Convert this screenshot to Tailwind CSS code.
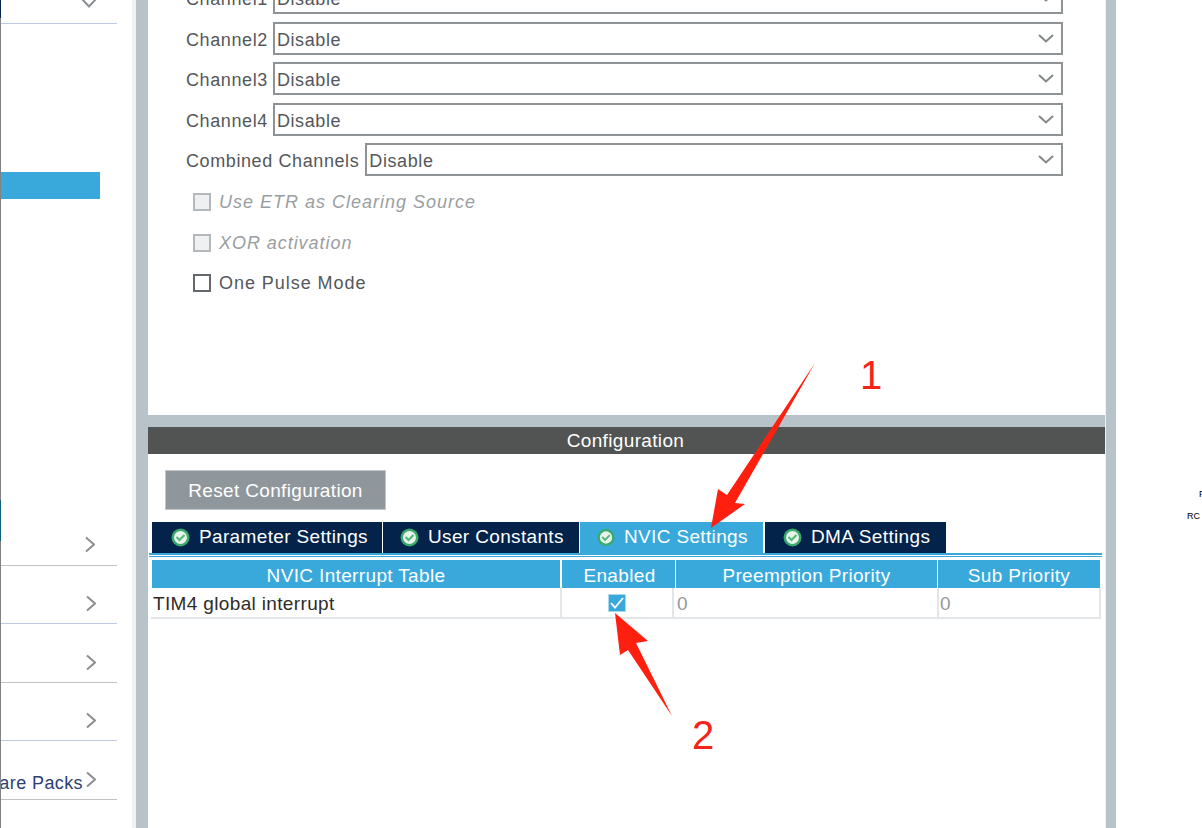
<!DOCTYPE html>
<html lang="en">
<head>
    <meta charset="UTF-8">
    <title>TIM4 NVIC Settings</title>
    <script src="https://cdn.jsdelivr.net/npm/@tailwindcss/browser@4"></script>
</head>
<body class="bg-white">
    <div class="relative flex w-[1202px] h-[828px] overflow-hidden bg-white font-['Liberation_Sans',Arial,sans-serif] text-[18px] text-[#54585c] tracking-[0.6px]">

        <!-- left list, cut off by the crop -->
        <aside class="relative w-[132px] h-full shrink-0 flex flex-col border-l border-[#808284]">
            <div class="absolute left-[-1px] top-0 w-[1px] h-[18px] bg-[#03234b]"></div>
            <div class="absolute left-[-1px] top-[500px] w-[1px] h-[41px] bg-[#0f5f80]"></div>
            <div class="w-[116px] h-[24px] shrink-0 border-b border-[#bccbe2] flex justify-end items-start pr-[19px]">
                <svg class="mt-[-2px]" width="18" height="10" viewBox="0 0 18 10" fill="none" stroke="#8b8f92" stroke-width="2"><path d="M2 1 L9 8.5 L16 1"/></svg>
            </div>
            <div class="w-[116px] h-[542px] shrink-0 border-b border-[#bcc2c6] pt-[148px] flex flex-col">
                <div class="w-[99px] h-[27px] bg-[#39a9dc]"></div>
                <svg class="mt-auto mb-[12px] ml-[84px]" width="10" height="17" viewBox="0 0 10 16" fill="none" stroke="#8b8f92" stroke-width="2"><path d="M1 1 L9 8 L1 15"/></svg>
            </div>
            <div class="w-[116px] h-[58px] shrink-0 border-b border-[#bccbe2] flex justify-end items-center pr-[21px] pt-[17px]">
                <svg width="10" height="17" viewBox="0 0 10 16" fill="none" stroke="#8b8f92" stroke-width="2"><path d="M1 1 L9 8 L1 15"/></svg>
            </div>
            <div class="w-[116px] h-[59px] shrink-0 border-b border-[#bcc2c6] flex justify-end items-center pr-[21px] pt-[18px]">
                <svg width="10" height="17" viewBox="0 0 10 16" fill="none" stroke="#8b8f92" stroke-width="2"><path d="M1 1 L9 8 L1 15"/></svg>
            </div>
            <div class="w-[116px] h-[58px] shrink-0 border-b border-[#bccbe2] flex justify-end items-center pr-[21px] pt-[17px]">
                <svg width="10" height="17" viewBox="0 0 10 16" fill="none" stroke="#8b8f92" stroke-width="2"><path d="M1 1 L9 8 L1 15"/></svg>
            </div>
            <div class="w-[116px] h-[59px] shrink-0 border-b border-[#bcc2c6] flex justify-end items-center overflow-hidden">
                <span class="text-[#2d3f73] whitespace-nowrap pt-[26px] tracking-[0.4px]">Software Packs</span>
                <svg class="shrink-0 mr-[21px] ml-[3px] mt-[18px]" width="10" height="17" viewBox="0 0 10 16" fill="none" stroke="#8b8f92" stroke-width="2"><path d="M1 1 L9 8 L1 15"/></svg>
            </div>
        </aside>

        <div class="w-[4px] h-full shrink-0 bg-[#eef0f1]"></div>
        <div class="w-[12px] h-full shrink-0 bg-[#b8c3c9]"></div>

        <!-- mode + configuration panels -->
        <main class="w-[958px] h-full shrink-0 flex flex-col bg-[#b8c3c9] border-r border-[#eef0f1]">
            <section class="h-[415px] shrink-0 bg-white pl-[38px] overflow-hidden">
                <div class="flex items-center gap-[5px] h-[33px] mt-[-19px]">
                    <span class="pt-[3px]">Channel1</span>
                    <div class="flex-1 h-[33px] mr-[42px] border-2 border-[#8d9296] flex items-center justify-between pl-[2px] pr-[6px]"><span class="pt-[3px]">Disable</span><svg width="18" height="9" viewBox="0 0 18 9" fill="none" stroke="#83878a" stroke-width="2"><path d="M2 1 L9 7.5 L16 1"/></svg></div>
                </div>
                <div class="flex items-center gap-[5px] h-[33px] mt-[8px]">
                    <span class="pt-[3px]">Channel2</span>
                    <div class="flex-1 h-[33px] mr-[42px] border-2 border-[#8d9296] flex items-center justify-between pl-[2px] pr-[6px]"><span class="pt-[3px]">Disable</span><svg width="18" height="9" viewBox="0 0 18 9" fill="none" stroke="#83878a" stroke-width="2"><path d="M2 1 L9 7.5 L16 1"/></svg></div>
                </div>
                <div class="flex items-center gap-[5px] h-[33px] mt-[7px]">
                    <span class="pt-[3px]">Channel3</span>
                    <div class="flex-1 h-[33px] mr-[42px] border-2 border-[#8d9296] flex items-center justify-between pl-[2px] pr-[6px]"><span class="pt-[3px]">Disable</span><svg width="18" height="9" viewBox="0 0 18 9" fill="none" stroke="#83878a" stroke-width="2"><path d="M2 1 L9 7.5 L16 1"/></svg></div>
                </div>
                <div class="flex items-center gap-[5px] h-[33px] mt-[8px]">
                    <span class="pt-[3px]">Channel4</span>
                    <div class="flex-1 h-[33px] mr-[42px] border-2 border-[#8d9296] flex items-center justify-between pl-[2px] pr-[6px]"><span class="pt-[3px]">Disable</span><svg width="18" height="9" viewBox="0 0 18 9" fill="none" stroke="#83878a" stroke-width="2"><path d="M2 1 L9 7.5 L16 1"/></svg></div>
                </div>
                <div class="flex items-center gap-[6px] h-[33px] mt-[7px]">
                    <span class="pt-[3px]">Combined Channels</span>
                    <div class="flex-1 h-[33px] mr-[42px] border-2 border-[#8d9296] flex items-center justify-between pl-[2px] pr-[6px]"><span class="pt-[3px]">Disable</span><svg width="18" height="9" viewBox="0 0 18 9" fill="none" stroke="#83878a" stroke-width="2"><path d="M2 1 L9 7.5 L16 1"/></svg></div>
                </div>
                <div class="flex items-center gap-[8px] h-[18px] mt-[17px] ml-[7px]">
                    <div class="w-[18px] h-[18px] border-2 border-[#b4b8bb] bg-[#eef0f2]"></div>
                    <span class="italic text-[#9a9ea1] tracking-[1px]">Use ETR as Clearing Source</span>
                </div>
                <div class="flex items-center gap-[8px] h-[18px] mt-[23px] ml-[7px]">
                    <div class="w-[18px] h-[18px] border-2 border-[#b4b8bb] bg-[#eef0f2]"></div>
                    <span class="italic text-[#9a9ea1] tracking-[0.95px]">XOR activation</span>
                </div>
                <div class="flex items-center gap-[8px] h-[18px] mt-[22px] ml-[7px]">
                    <div class="w-[18px] h-[18px] border-2 border-[#66696c] bg-white"></div>
                    <span class="tracking-[0.95px]">One Pulse Mode</span>
                </div>
            </section>

            <section class="h-[401px] mt-[12px] shrink-0 bg-white flex flex-col text-[19px] tracking-[0.35px]">
                <div class="h-[27px] shrink-0 bg-[#525453] text-white text-center leading-[28px] pr-[2px]">Configuration</div>
                <button class="w-[221px] h-[40px] ml-[17px] mt-[16px] shrink-0 bg-[#90979c] border border-[#c3c7ca] text-white pt-[2px]">Reset Configuration</button>

                <div class="flex h-[31px] mt-[12px] ml-[4px] shrink-0 text-white">
                    <div class="w-[230px] bg-[#03234b] flex items-center gap-[9px] pl-[19px]">
                        <svg width="19" height="19" viewBox="0 0 19 19"><circle cx="9.5" cy="9.5" r="9" fill="#3aa96c"/><circle cx="9.5" cy="9.5" r="6.5" fill="#e8f3ec"/><path d="M5.5 9 L8.5 12 L13.5 7" fill="none" stroke="#4fb877" stroke-width="2"/></svg>
                        <span>Parameter Settings</span>
                    </div>
                    <div class="w-[196px] ml-[1px] bg-[#03234b] flex items-center gap-[9px] pl-[17px]">
                        <svg width="19" height="19" viewBox="0 0 19 19"><circle cx="9.5" cy="9.5" r="9" fill="#3aa96c"/><circle cx="9.5" cy="9.5" r="6.5" fill="#e8f3ec"/><path d="M5.5 9 L8.5 12 L13.5 7" fill="none" stroke="#4fb877" stroke-width="2"/></svg>
                        <span>User Constants</span>
                    </div>
                    <div class="w-[183px] ml-[1px] bg-[#39a9dc] flex items-center gap-[9px] pl-[17px]">
                        <svg width="18" height="19" viewBox="0 0 19 19"><circle cx="9.5" cy="9.5" r="9" fill="#3aa96c"/><circle cx="9.5" cy="9.5" r="6.5" fill="#e8f3ec"/><path d="M5.5 9 L8.5 12 L13.5 7" fill="none" stroke="#4fb877" stroke-width="2"/></svg>
                        <span>NVIC Settings</span>
                    </div>
                    <div class="w-[181px] ml-[2px] bg-[#03234b] flex items-center gap-[9px] pl-[18px]">
                        <svg width="19" height="19" viewBox="0 0 19 19"><circle cx="9.5" cy="9.5" r="9" fill="#3aa96c"/><circle cx="9.5" cy="9.5" r="6.5" fill="#e8f3ec"/><path d="M5.5 9 L8.5 12 L13.5 7" fill="none" stroke="#4fb877" stroke-width="2"/></svg>
                        <span>DMA Settings</span>
                    </div>
                </div>
                <div class="h-[4px] ml-[1px] mr-[3px] shrink-0 border-y border-[#39a9dc] border-t-2"></div>

                <div class="flex ml-[4px] mt-[3px] h-[28px] shrink-0 text-white text-center leading-[31px]">
                    <div class="w-[408px] bg-[#39a9dc]">NVIC Interrupt Table</div>
                    <div class="w-[113px] ml-[2px] bg-[#39a9dc] pl-[2px]">Enabled</div>
                    <div class="w-[261px] ml-[1px] bg-[#39a9dc]">Preemption Priority</div>
                    <div class="w-[162px] ml-[1px] bg-[#39a9dc]">Sub Priority</div>
                </div>
                <div class="flex ml-[3px] w-[950px] h-[31px] shrink-0 border-b-2 border-[#e3e6e9] leading-[31px]">
                    <div class="w-[409px] pl-[2px] text-[#2f2b28]">TIM4 global interrupt</div>
                    <div class="w-[114px] border-x-2 border-[#e3e6e9] flex items-center justify-center">
                        <div class="w-[18px] h-[18px] bg-[#39a9dc] border border-[#a9d9f0] flex items-center justify-center">
                            <svg width="14" height="12" viewBox="0 0 14 12" fill="none" stroke="white" stroke-width="1.8"><path d="M1 6 L5 10.5 L13 1"/></svg>
                        </div>
                    </div>
                    <div class="w-[263px] pl-[3px] text-[#96999c]">0</div>
                    <div class="flex-1 border-x-2 border-[#e3e6e9] pl-[1px] text-[#96999c]">0</div>
                </div>
            </section>
        </main>

        <!-- right gutter -->
        <div class="w-[10px] h-full shrink-0 bg-[#b8c3c9]"></div>

        <!-- canvas labels cut by the right edge -->
        <span class="absolute left-[1199px] top-[489px] text-[9px] leading-[10px] tracking-normal text-black">F</span>
        <span class="absolute left-[1187px] top-[511px] text-[9px] leading-[10px] tracking-normal text-black">RC</span>

        <!-- red annotations drawn over the screenshot -->
        <svg class="absolute left-0 top-0 pointer-events-none" width="1202" height="828" viewBox="0 0 1202 828">
            <polygon fill="#ff1f0f" points="815,363 735,503 745,504 711,528 718,489 727,495"/>
            <polygon fill="#ff1f0f" points="615,613 648,641 636,643 672,716 628,650 620,655"/>
        </svg>
        <span class="absolute left-[860px] top-[353px] text-[40px] leading-[44px] tracking-normal text-[#f5231a]">1</span>
        <span class="absolute left-[692px] top-[713px] text-[40px] leading-[44px] tracking-normal text-[#f5231a]">2</span>
    </div>
</body>
</html>
